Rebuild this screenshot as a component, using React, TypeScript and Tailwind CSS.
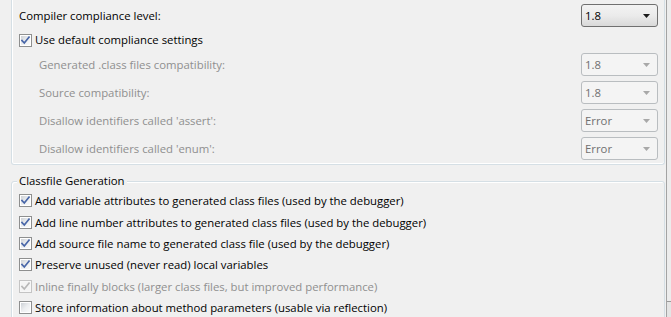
import React from 'react';

function Check({ checked, disabled }: { checked?: boolean; disabled?: boolean }) {
  return (
    <span
      className={`relative flex items-center justify-center w-[13px] h-[13px] shrink-0 border ${
        disabled ? 'border-[#c4c4c4] bg-[#f7f7f7]' : 'border-[#8e8f8f] bg-white'
      }`}
    >
      <span
        className={`absolute inset-[1px] ${
          disabled ? 'bg-[#f4f4f4]' : 'bg-gradient-to-br from-[#cdd1d6] via-[#eceef0] to-[#fafafa]'
        }`}
      />
      {checked && (
        <svg width="11" height="11" viewBox="0 0 11 11" className="relative">
          <path
            d="M2 5.5 L4.3 8 L9 2.2"
            fill="none"
            stroke={disabled ? '#b8b8b8' : '#4866a8'}
            strokeWidth="1.7"
            strokeLinecap="square"
          />
        </svg>
      )}
    </span>
  );
}

function Combo({ value, disabled }: { value: string; disabled?: boolean }) {
  return (
    <div
      className={`flex items-center w-[77px] h-[23px] rounded-[3px] border pl-[3px] pr-[7px] ${
        disabled
          ? 'border-[#b9bdc0] bg-[#f4f4f4] text-[#707070]'
          : 'border-[#707070] bg-gradient-to-b from-[#f3f3f3] via-[#ebebeb] to-[#d9d9d9] text-black'
      }`}
    >
      <span className="flex-1">{value}</span>
      <svg width="7" height="4" viewBox="0 0 7 4">
        <path d="M0 0h7L3.5 4z" fill={disabled ? '#a8a8a8' : '#1a1a1a'} />
      </svg>
    </div>
  );
}

const disabledRows = [
  { label: 'Generated .class files compatibility:', value: '1.8' },
  { label: 'Source compatibility:', value: '1.8' },
  { label: "Disallow identifiers called 'assert':", value: 'Error' },
  { label: "Disallow identifiers called 'enum':", value: 'Error' },
];

const classfileRows = [
  { label: 'Add variable attributes to generated class files (used by the debugger)', checked: true },
  { label: 'Add line number attributes to generated class files (used by the debugger)', checked: true },
  { label: 'Add source file name to generated class file (used by the debugger)', checked: true },
  { label: 'Preserve unused (never read) local variables', checked: true },
  { label: 'Inline finally blocks (larger class files, but improved performance)', checked: true, disabled: true },
  { label: 'Store information about method parameters (usable via reflection)', checked: false },
];

export default function App() {
  return (
    <div className="flex w-[671px] h-[317px] overflow-hidden bg-[#f0f0f0] text-[11.35px] text-black font-['Open_Sans',sans-serif]">
      <div className="w-[666px] pl-[11px] pr-[1px]">
        {/* compliance group, top edge scrolled out of view */}
        <div className="h-[165px] border-x border-b border-[#d5dfe5] rounded-b-[3px] shadow-[inset_1px_0_0_#fff,inset_0_-1px_0_#fff] pt-[4px] pl-[7px] pr-[6px]">
          <div className="flex items-center justify-between h-[23px]">
            <span>Compiler compliance level:</span>
            <Combo value="1.8" />
          </div>
          <div className="flex items-center gap-[3px] h-[26px]">
            <Check checked />
            <span>Use default compliance settings</span>
          </div>
          <div className="flex flex-col gap-[5px]">
            {disabledRows.map(r => (
              <div key={r.label} className="flex items-center justify-between h-[23px] pl-[20px]">
                <span className="text-[#8f8f8f]">{r.label}</span>
                <Combo value={r.value} disabled />
              </div>
            ))}
          </div>
        </div>

        {/* classfile generation group */}
        <div className="relative mt-[16px] h-[200px] border border-[#d5dfe5] rounded-[3px] shadow-[inset_1px_1px_0_#fff] pt-[8px] pl-[7px]">
          <span className="absolute -top-[9px] left-[5px] px-[2px] bg-[#f0f0f0] leading-[16px]">
            Classfile Generation
          </span>
          {classfileRows.map(r => (
            <div key={r.label} className="flex items-center gap-[3px] h-[21.4px]">
              <Check checked={r.checked} disabled={r.disabled} />
              <span className={r.disabled ? 'text-[#8f8f8f]' : ''}>{r.label}</span>
            </div>
          ))}
        </div>
      </div>

      {/* scrollbar edge */}
      <div className="w-[5px] flex flex-col border-l border-[#a3a3a3]">
        <div className="h-[302px] border-b border-[#9a9a9a] bg-[#ececec]" />
        <div className="flex-1 bg-[#e4e4e4]" />
      </div>
    </div>
  );
}
